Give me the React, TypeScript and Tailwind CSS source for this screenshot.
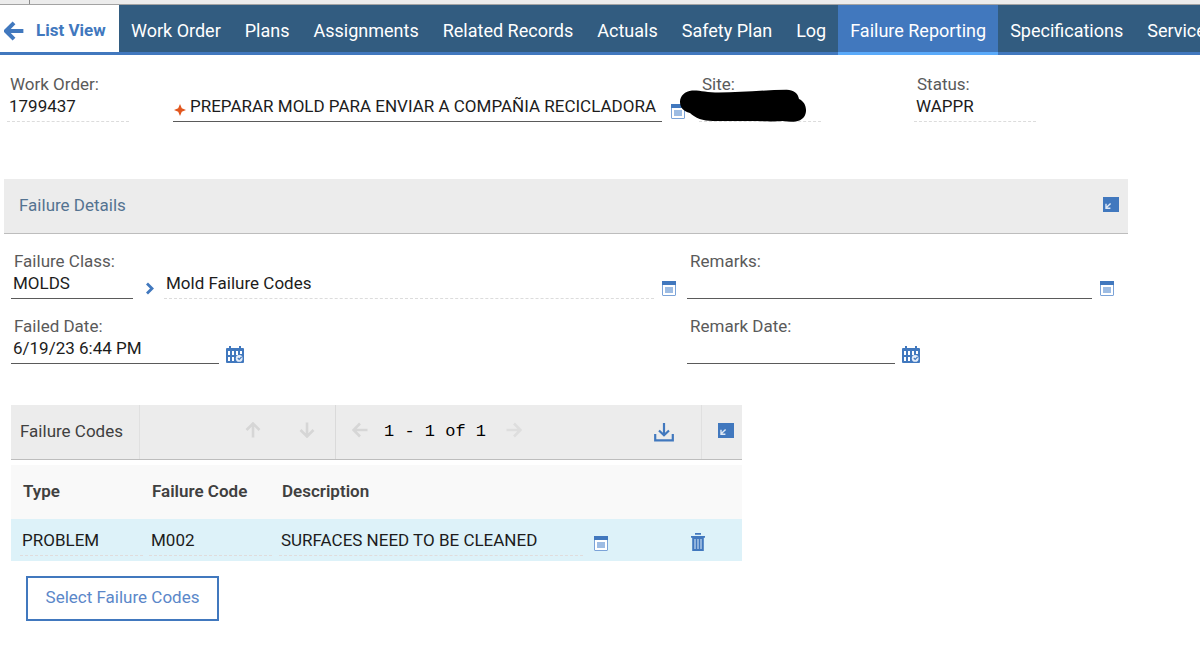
import type { ReactNode } from 'react';

const BLUE = '#4178be';

function DetailIcon() {
  return (
    <svg width="14" height="15" viewBox="0 0 14 15" className="block" aria-hidden="true">
      <rect x="0.5" y="0.5" width="13" height="14" rx="0.5" fill="#fff" stroke="#7ba3d8" />
      <rect width="14" height="4" fill={BLUE} />
      <rect x="3" y="6" width="8" height="6" fill="#9dbce3" />
    </svg>
  );
}

function CalendarIcon() {
  return (
    <svg width="18" height="18" viewBox="0 0 18 18" className="block" aria-hidden="true">
      <rect x="3" y="0" width="2" height="3" fill={BLUE} />
      <rect x="13" y="0" width="2" height="3" fill={BLUE} />
      <rect x="0" y="2" width="18" height="15" rx="1" fill={BLUE} />
      <g fill="#fff">
        <rect x="2" y="5" width="2" height="4" />
        <rect x="6" y="5" width="2" height="4" />
        <rect x="10" y="5" width="2" height="4" />
        <rect x="14" y="5" width="2" height="3" />
        <rect x="2" y="11" width="2" height="4" />
        <rect x="6" y="11" width="2" height="4" />
        <circle cx="13.2" cy="12.4" r="3.4" fill="#e3ecf8" />
      </g>
      <path d="M11.8 12 13.2 13.4 15.6 10.8" fill="none" stroke={BLUE} strokeWidth="1.2" />
    </svg>
  );
}

function CollapseIcon() {
  return (
    <svg width="16" height="15" viewBox="0 0 16 15" className="block" aria-hidden="true">
      <rect width="16" height="15" fill={BLUE} />
      <path d="M7.6 6.4 3.4 10.6M3 6.8V11.2H7.4" fill="none" stroke="#dfe9f6" strokeWidth="1.4" />
    </svg>
  );
}

function ArrowIcon({ turn, size, color, stroke }: { turn: number; size: number; color: string; stroke: number }) {
  return (
    <svg width={size} height={size} viewBox="0 0 16 16" className="block" aria-hidden="true">
      <path
        d="M15.5 8H2M8 1.5 1.5 8 8 14.5"
        fill="none"
        stroke={color}
        strokeWidth={stroke}
        transform={`rotate(${turn} 8 8)`}
      />
    </svg>
  );
}

function DownloadIcon() {
  return (
    <svg width="20" height="20" viewBox="0 0 20 20" className="block" aria-hidden="true">
      <path d="M10 1V13M5 8.5 10 13.3 15 8.5M1.2 12V18.4H18.8V12" fill="none" stroke={BLUE} strokeWidth="2.2" />
    </svg>
  );
}

function TrashIcon() {
  return (
    <svg width="14" height="18" viewBox="0 0 14 18" className="block" aria-hidden="true">
      <path d="M4 .8H10M0 3.8H14" stroke={BLUE} strokeWidth="1.8" />
      <rect x="1.2" y="4" width="11.6" height="14" fill={BLUE} />
      <path d="M4 6V16M7 6V16M10 6V16" stroke="#cfe3f4" strokeWidth="1.1" />
    </svg>
  );
}

function RequiredIcon() {
  return (
    <svg width="12" height="12" viewBox="0 0 12 12" className="block" aria-hidden="true">
      <path d="M6 0 7.8 4.2 12 6 7.8 7.8 6 12 4.2 7.8 0 6 4.2 4.2Z" fill="#e2571e" />
    </svg>
  );
}

function IconButton({ label, children }: { label: string; children: ReactNode }) {
  return (
    <button type="button" aria-label={label} className="block shrink-0">
      {children}
    </button>
  );
}

type FieldProps = {
  id: string;
  label?: string;
  name?: string;
  value?: string;
  readOnly?: boolean;
  required?: boolean;
  className: string;
};

function Field({ id, label, name, value = '', readOnly, required, className }: FieldProps) {
  return (
    <div className={className}>
      <label htmlFor={id} className="block h-[22px] pl-[3px] leading-[22px] text-[#5a5a5a]">
        {label}
      </label>
      <div
        className={
          readOnly
            ? 'flex h-[27px] items-center border-b border-dashed border-[#dcdcdc] pb-[2px]'
            : 'flex h-[27px] items-center border-b border-[#5a5a5a] pb-[2px]'
        }
      >
        {required && (
          <span className="mt-[6px] shrink-0 pr-[2px] pl-px">
            <RequiredIcon />
          </span>
        )}
        <input
          id={id}
          aria-label={name}
          defaultValue={value}
          readOnly={readOnly}
          className="w-full min-w-0 bg-transparent pl-[2px] text-[#1c1c1c] outline-none"
        />
      </div>
    </div>
  );
}

const tabs = [
  'Work Order',
  'Plans',
  'Assignments',
  'Related Records',
  'Actuals',
  'Safety Plan',
  'Log',
  'Failure Reporting',
  'Specifications',
  'Service Address',
];

export default function App() {
  return (
    <div className="min-h-screen overflow-hidden bg-white font-['Roboto','Liberation_Sans',sans-serif] text-[17px] text-[#1c1c1c]">
      <div className="flex h-[5px] border-b border-[#a3a3a3] bg-[#ececec]">
        <div className="w-[30px] border-r border-[#8a8a8a]" />
      </div>

      <nav className="flex h-[50px] overflow-hidden whitespace-nowrap bg-[#325c80] text-[18px]">
        <a
          href="#list"
          className="flex w-[119px] shrink-0 items-center gap-3 border-b-3 border-[#4178be] bg-white pt-1 pl-1 text-[17px] font-bold text-[#4178be]"
        >
          <ArrowIcon turn={0} size={20} color={BLUE} stroke={3.2} />
          List View
        </a>
        {tabs.map((tab) => (
          <a
            key={tab}
            href={'#' + tab.toLowerCase().replace(' ', '-')}
            className={
              tab === 'Failure Reporting'
                ? 'flex shrink-0 items-center border-b-3 border-[#5aaafa] bg-[#4178be] px-3 pt-1 text-white'
                : 'flex shrink-0 items-center border-b-3 border-[#4178be] px-3 pt-1 text-white'
            }
          >
            {tab}
          </a>
        ))}
      </nav>

      <main>
        <header className="flex pt-[18px] pl-[7px]">
          <Field id="wo" label="Work Order:" value="1799437" readOnly className="w-[122px]" />
          <Field
            id="wo-desc"
            name="Work order description"
            value="PREPARAR MOLD PARA ENVIAR A COMPAÑIA RECICLADORA"
            required
            className="ml-11 w-[489px]"
          />
          <div className="mt-[31px] ml-[9px]">
            <IconButton label="Long description">
              <DetailIcon />
            </IconButton>
          </div>
          <div className="relative ml-[14px]">
            <Field id="site" label="Site:" readOnly className="w-[122px]" />
            <svg
              width="128"
              height="34"
              viewBox="0 0 128 34"
              className="absolute top-4 -left-5"
              aria-hidden="true"
            >
              <path
                d="M13 1.500C20 1 28 3.500 40 3.500C60 3.500 85 1 107 .8C114 .5 119 4 120 10C127 13 129 22 125 28C120 34 112 33 104 32C92 33 82 32 70 32L34 32C24 32 16 29 11 24C4 22 1 18 1 13C1 7 6 2 13 1.500Z"
                fill="#000"
              />
            </svg>
          </div>
          <Field id="status" label="Status:" value="WAPPR" readOnly className="ml-[93px] w-[122px]" />
        </header>

        <section className="mt-[57px] mr-[72px] ml-1">
          <div className="flex h-[55px] items-center justify-between border-b border-[#bdbdbd] bg-[#ececec] pr-[9px] pl-[15px]">
            <h2 className="text-[#547391]">Failure Details</h2>
            <div className="mb-1">
              <IconButton label="Collapse failure details">
                <CollapseIcon />
              </IconButton>
            </div>
          </div>

          <div className="grid grid-cols-[676fr_441fr] gap-y-4 pt-4 pl-[7px]">
            <div className="flex items-end">
              <Field id="class" label="Failure Class:" value="MOLDS" className="w-[122px]" />
              <div className="mr-[7px] mb-1 ml-[11px]">
                <IconButton label="Failure class options">
                  <svg width="13" height="13" viewBox="0 0 13 13" className="block" aria-hidden="true">
                    <path d="M3 1.500 8 6.500 3 11.500" fill="none" stroke={BLUE} strokeWidth="2.800" />
                  </svg>
                </IconButton>
              </div>
              <Field
                id="class-desc"
                name="Failure class description"
                value="Mold Failure Codes"
                readOnly
                className="min-w-0 flex-1"
              />
              <div className="mr-[11px] mb-[3px] ml-2">
                <IconButton label="Failure class details">
                  <DetailIcon />
                </IconButton>
              </div>
            </div>
            <div className="flex items-end">
              <Field id="remarks" label="Remarks:" className="min-w-0 flex-1" />
              <div className="mr-[14px] mb-[3px] ml-2">
                <IconButton label="Remarks details">
                  <DetailIcon />
                </IconButton>
              </div>
            </div>
            <div className="flex items-end gap-[7px]">
              <Field id="failed" label="Failed Date:" value="6/19/23 6:44 PM" className="w-[208px]" />
              <IconButton label="Choose failed date">
                <CalendarIcon />
              </IconButton>
            </div>
            <div className="flex items-end gap-[7px]">
              <Field id="remark-date" label="Remark Date:" className="w-[208px]" />
              <IconButton label="Choose remark date">
                <CalendarIcon />
              </IconButton>
            </div>
          </div>
        </section>

        <section className="mt-[41px] ml-[11px] w-[731px] max-w-full">
          <div className="flex h-[55px] border-b border-[#bdbdbd] bg-[#ececec]">
            <h2 className="flex w-[129px] items-center border-r border-[#e0e0e0] pl-[9px] text-[#404040]">
              Failure Codes
            </h2>
            <div className="flex w-[196px] items-center justify-end gap-[38px] border-r border-[#dadada] pr-5 pb-1">
              <IconButton label="Previous row">
                <ArrowIcon turn={90} size={16} color="#d6d6d6" stroke={2.6} />
              </IconButton>
              <IconButton label="Next row">
                <ArrowIcon turn={-90} size={16} color="#d6d6d6" stroke={2.6} />
              </IconButton>
            </div>
            <div className="flex flex-1 items-center border-r border-[#e0e0e0] pr-[27px] pb-1 pl-4">
              <IconButton label="Previous page">
                <ArrowIcon turn={0} size={16} color="#d6d6d6" stroke={2.6} />
              </IconButton>
              <span className="pt-1 pr-5 pl-4 font-['Liberation_Mono',monospace] text-black">1 - 1 of 1</span>
              <IconButton label="Next page">
                <ArrowIcon turn={180} size={16} color="#dedede" stroke={2.6} />
              </IconButton>
              <div className="mt-1 ml-auto">
                <IconButton label="Download">
                  <DownloadIcon />
                </IconButton>
              </div>
            </div>
            <div className="flex w-10 items-center justify-end pr-2 pb-1">
              <IconButton label="Collapse failure codes">
                <CollapseIcon />
              </IconButton>
            </div>
          </div>

          <table className="mt-[5px] w-full table-fixed border-collapse text-left">
            <colgroup>
              <col className="w-[129px]" />
              <col className="w-[130px]" />
              <col className="w-[313px]" />
              <col />
              <col className="w-[52px]" />
            </colgroup>
            <thead>
              <tr className="h-[54px] bg-[#f9f9f9] text-[#404040]">
                <th className="pl-3 font-semibold">Type</th>
                <th className="pl-3 font-semibold">Failure Code</th>
                <th className="pl-3 font-semibold">Description</th>
                <th />
                <th />
              </tr>
            </thead>
            <tbody>
              <tr className="h-[42px] bg-[#ddf2f9] align-top">
                <td className="pt-2 pl-[9px]">
                  <div className="mr-[-3px] h-[29px] border-b border-dashed border-[#e0dcdc] pl-[2px] leading-[26px]">
                    PROBLEM
                  </div>
                </td>
                <td className="pt-2 pl-[9px]">
                  <div className="mr-[-2px] h-[29px] border-b border-dashed border-[#e0dcdc] pl-[2px] leading-[26px]">
                    M002
                  </div>
                </td>
                <td className="pt-2 pl-[9px]">
                  <div className="h-[29px] border-b border-dashed border-[#e0dcdc] pl-[2px] leading-[26px]">
                    SURFACES NEED TO BE CLEANED
                  </div>
                </td>
                <td className="pt-[17px] pl-[11px]">
                  <IconButton label="Description details">
                    <DetailIcon />
                  </IconButton>
                </td>
                <td className="pt-[14px] pl-px">
                  <IconButton label="Delete row">
                    <TrashIcon />
                  </IconButton>
                </td>
              </tr>
            </tbody>
          </table>

          <button
            type="button"
            className="mt-[15px] ml-[15px] h-[45px] w-[193px] border-2 border-[#4178be] bg-white pb-[2px] text-[#5b87c9]"
          >
            Select Failure Codes
          </button>
        </section>
      </main>
    </div>
  );
}
